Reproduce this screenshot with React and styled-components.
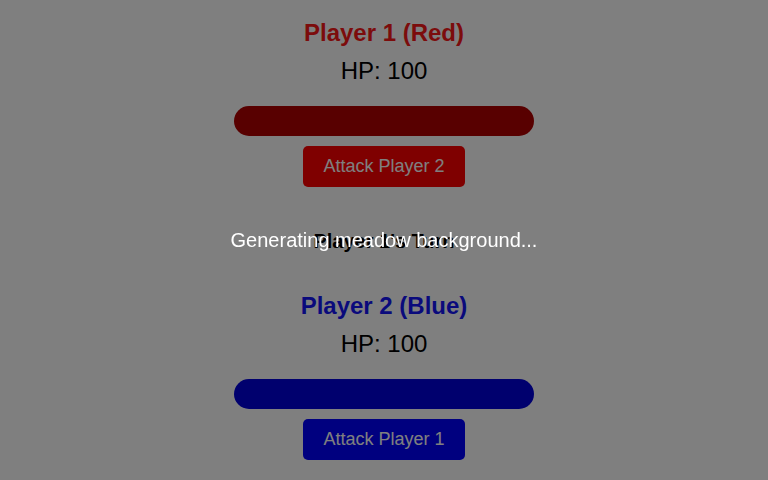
import React, { useState } from "react";
import styled, { createGlobalStyle } from "styled-components";

const GlobalStyle = createGlobalStyle`
  body {
    margin: 0;
    background: #ffffff;
    font-family: "Liberation Sans", Arial, sans-serif;
  }
`;

const Game = styled.div`
  display: flex;
  flex-direction: column;
  align-items: center;
  padding-top: 19px;
`;

const Panel = styled.section`
  display: flex;
  flex-direction: column;
  align-items: center;
`;

const Name = styled.h2`
  margin: 0;
  font-size: 24px;
  line-height: 28px;
  font-weight: bold;
  color: ${p => p.$color};
`;

const Hp = styled.p`
  margin: 10px 0 0;
  font-size: 24px;
  line-height: 28px;
  color: #000;
`;

const Bar = styled.div`
  margin-top: 21px;
  width: 300px;
  height: 30px;
  border-radius: 15px;
  background: #ddd;
  overflow: hidden;
`;

const Fill = styled.div`
  height: 100%;
  background: ${p => p.$color};
`;

const AttackButton = styled.button`
  margin-top: 10px;
  padding: 10px 20px;
  border: none;
  border-radius: 5px;
  font-family: inherit;
  font-size: 18px;
  line-height: 21px;
  color: #fff;
  background: ${p => p.$color};
  cursor: pointer;
`;

const Turn = styled.h3`
  margin: 43px 0 39px;
  font-size: 20px;
  line-height: 23px;
  font-weight: bold;
  color: #000;
`;

const Overlay = styled.div`
  position: fixed;
  inset: 0;
  display: flex;
  align-items: center;
  justify-content: center;
  background: rgba(0, 0, 0, 0.5);
  color: #fff;
  font-size: 20px;
  z-index: 10;
`;

const players = [
  { id: 1, label: "Player 1 (Red)", text: "#f81818", bar: "#b00000", button: "#ff0000" },
  { id: 2, label: "Player 2 (Blue)", text: "#1414f8", bar: "#0000dc", button: "#0000ff" }
];

function PlayerCard({ player, hp, onAttack }) {
  const other = player.id === 1 ? 2 : 1;
  return (
    <Panel>
      <Name $color={player.text}>{player.label}</Name>
      <Hp>HP: {hp}</Hp>
      <Bar>
        <Fill $color={player.bar} style={{ width: `${hp}%` }} />
      </Bar>
      <AttackButton $color={player.button} onClick={onAttack}>
        Attack Player {other}
      </AttackButton>
    </Panel>
  );
}

export default function App() {
  const [hp] = useState({ 1: 100, 2: 100 });
  const [turn] = useState(1);

  return (
    <>
      <GlobalStyle />
      <Game>
        <PlayerCard player={players[0]} hp={hp[1]} />
        <Turn>Player {turn}'s Turn</Turn>
        <PlayerCard player={players[1]} hp={hp[2]} />
      </Game>
      <Overlay>Generating meadow background...</Overlay>
    </>
  );
}
